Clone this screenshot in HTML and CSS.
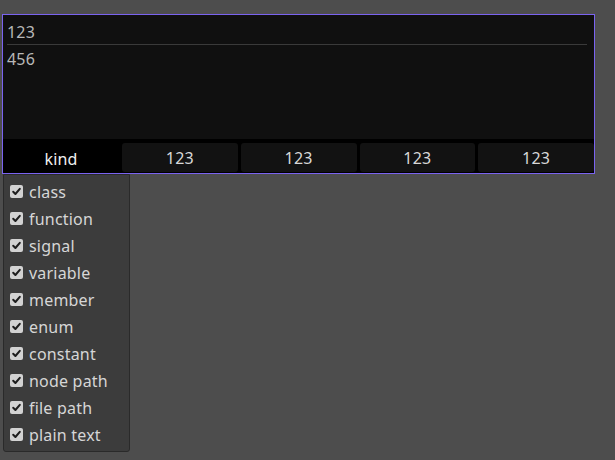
FILE: index.html
```html
<!DOCTYPE html>
<html>
<head>
<meta charset="utf-8">
<link rel="stylesheet" href="styles.css">
</head>
<body>
<div class="panel">
  <div class="list">
    <div class="row sep">123</div>
    <div class="row">456</div>
  </div>
  <div class="header">
    <div class="kind">kind</div>
    <div class="cell">123</div>
    <div class="cell">123</div>
    <div class="cell">123</div>
    <div class="cell">123</div>
  </div>
</div>
<div class="popup">
  <div class="item"><span class="box"><svg viewBox="0 0 13 13" width="13" height="13"><path d="M3.2 6.8 L5.4 9 L9.8 3.8" fill="none" stroke="#1e1e1e" stroke-width="2" stroke-linecap="round" stroke-linejoin="round"/></svg></span>class</div>
  <div class="item"><span class="box"><svg viewBox="0 0 13 13" width="13" height="13"><path d="M3.2 6.8 L5.4 9 L9.8 3.8" fill="none" stroke="#1e1e1e" stroke-width="2" stroke-linecap="round" stroke-linejoin="round"/></svg></span>function</div>
  <div class="item"><span class="box"><svg viewBox="0 0 13 13" width="13" height="13"><path d="M3.2 6.8 L5.4 9 L9.8 3.8" fill="none" stroke="#1e1e1e" stroke-width="2" stroke-linecap="round" stroke-linejoin="round"/></svg></span>signal</div>
  <div class="item"><span class="box"><svg viewBox="0 0 13 13" width="13" height="13"><path d="M3.2 6.8 L5.4 9 L9.8 3.8" fill="none" stroke="#1e1e1e" stroke-width="2" stroke-linecap="round" stroke-linejoin="round"/></svg></span>variable</div>
  <div class="item"><span class="box"><svg viewBox="0 0 13 13" width="13" height="13"><path d="M3.2 6.8 L5.4 9 L9.8 3.8" fill="none" stroke="#1e1e1e" stroke-width="2" stroke-linecap="round" stroke-linejoin="round"/></svg></span>member</div>
  <div class="item"><span class="box"><svg viewBox="0 0 13 13" width="13" height="13"><path d="M3.2 6.8 L5.4 9 L9.8 3.8" fill="none" stroke="#1e1e1e" stroke-width="2" stroke-linecap="round" stroke-linejoin="round"/></svg></span>enum</div>
  <div class="item"><span class="box"><svg viewBox="0 0 13 13" width="13" height="13"><path d="M3.2 6.8 L5.4 9 L9.8 3.8" fill="none" stroke="#1e1e1e" stroke-width="2" stroke-linecap="round" stroke-linejoin="round"/></svg></span>constant</div>
  <div class="item"><span class="box"><svg viewBox="0 0 13 13" width="13" height="13"><path d="M3.2 6.8 L5.4 9 L9.8 3.8" fill="none" stroke="#1e1e1e" stroke-width="2" stroke-linecap="round" stroke-linejoin="round"/></svg></span>node path</div>
  <div class="item"><span class="box"><svg viewBox="0 0 13 13" width="13" height="13"><path d="M3.2 6.8 L5.4 9 L9.8 3.8" fill="none" stroke="#1e1e1e" stroke-width="2" stroke-linecap="round" stroke-linejoin="round"/></svg></span>file path</div>
  <div class="item"><span class="box"><svg viewBox="0 0 13 13" width="13" height="13"><path d="M3.2 6.8 L5.4 9 L9.8 3.8" fill="none" stroke="#1e1e1e" stroke-width="2" stroke-linecap="round" stroke-linejoin="round"/></svg></span>plain text</div>
</div>
</body>
</html>
```

FILE: styles.css
```css
html, body {
  margin: 0;
  padding: 0;
  background: #4d4d4d;
  font-family: "Noto Sans", "Open Sans", sans-serif;
  font-size: 16px;
  letter-spacing: 0.2px;
}
.panel {
  margin: 14px 0 0 2px;
  width: 591px;
  height: 158px;
  border: 1px solid #7a63f0;
  background: #101010;
  display: flex;
  flex-direction: column;
}
.list {
  height: 121px;
  padding: 3px 7px 0 4px;
}
.row {
  height: 28px;
  line-height: 28px;
  color: #b8b8b8;
}
.row.sep {
  height: 26px;
  border-bottom: 1px solid #3a3a3a;
}
.header {
  flex: 1;
  background: #000;
  display: flex;
  gap: 3px;
  align-items: flex-end;
}
.kind {
  width: 116px;
  height: 30px;
  padding-top: 2px;
  box-sizing: border-box;
  line-height: 28px;
  text-align: center;
  color: #f0f0f0;
}
.cell {
  flex: 1;
  height: 29px;
  padding-top: 2px;
  box-sizing: border-box;
  line-height: 27px;
  margin-bottom: 1px;
  text-align: center;
  color: #d8d8d8;
  background: #121212;
  border-radius: 3px;
}
.popup {
  margin-left: 3px;
  width: 125px;
  height: 270px;
  padding: 3px 0;
  background: #3c3c3c;
  border: 1px solid #2a2a2a;
  border-radius: 0 0 3px 3px;
}
.item {
  height: 27px;
  display: flex;
  align-items: center;
  padding-left: 6px;
  color: #d6d6d6;
}
.box {
  width: 13px;
  height: 13px;
  border-radius: 2px;
  background: #d2d2d2;
  margin-right: 6px;
  display: flex;
}
```
